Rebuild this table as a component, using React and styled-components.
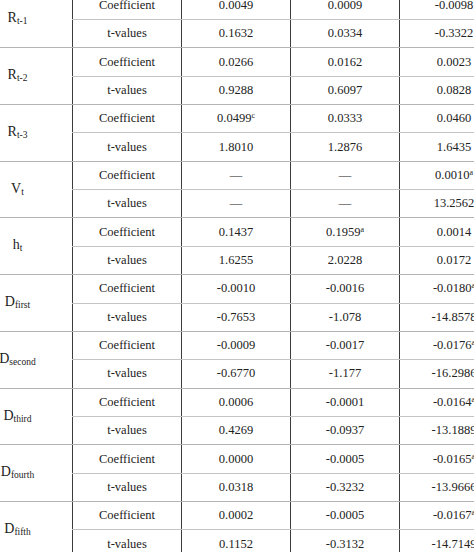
import React from "react";
import styled, { createGlobalStyle } from "styled-components";

const Global = createGlobalStyle`
  html, body { margin: 0; padding: 0; background: #fff; overflow: hidden; }
  body {
    width: 474px;
    height: 552px;
    font-family: "Liberation Serif", "Times New Roman", Times, serif;
  }
`;

const Table = styled.div`
  margin-top: -8.4px;
  margin-left: -37px;
  width: 545px;
  font-family: "Liberation Serif", "Times New Roman", Times, serif;
  font-size: 12.5px;
  color: #222;
`;

const Group = styled.div`
  display: flex;
  border-bottom: 1px solid #b4b4b4;
`;

const Label = styled.div`
  width: 109px;
  flex: none;
  display: flex;
  align-items: center;
  justify-content: center;
  font-size: 14px;
  color: #222;
  padding-bottom: 2px;
`;

const Sub = styled.span`
  font-size: 9.5px;
  position: relative;
  top: 3px;
`;

const Rows = styled.div`
  flex: 1;
  display: flex;
  flex-direction: column;
`;

const Row = styled.div`
  display: flex;
  box-sizing: border-box;
  height: ${(p) => (p.$last ? "27.37px" : "28.37px")};
  border-bottom: ${(p) => (p.$last ? "none" : "1px solid #c4c4c4")};
`;

const Cell = styled.div`
  width: 109px;
  flex: none;
  box-sizing: border-box;
  border-left: 1px solid #3c3c3c;
  display: flex;
  align-items: center;
  justify-content: center;
  white-space: nowrap;
`;

const Sup = styled.span`
  font-size: 8px;
  position: relative;
  top: -3px;
`;

const groups = [
  { l: "R", s: "t-1", c: ["0.0049", "0.0009", "-0.0098"], t: ["0.1632", "0.0334", "-0.3322"] },
  { l: "R", s: "t-2", c: ["0.0266", "0.0162", "0.0023"], t: ["0.9288", "0.6097", "0.0828"] },
  { l: "R", s: "t-3", c: [["0.0499", "c"], "0.0333", "0.0460"], t: ["1.8010", "1.2876", "1.6435"] },
  { l: "V", s: "t", c: ["—", "—", ["0.0010", "a"]], t: ["—", "—", "13.2562"] },
  { l: "h", s: "t", c: ["0.1437", ["0.1959", "a"], "0.0014"], t: ["1.6255", "2.0228", "0.0172"] },
  { l: "D", s: "first", c: ["-0.0010", "-0.0016", ["-0.0180", "a"]], t: ["-0.7653", "-1.078", "-14.8578"] },
  { l: "D", s: "second", c: ["-0.0009", "-0.0017", ["-0.0176", "a"]], t: ["-0.6770", "-1.177", "-16.2986"] },
  { l: "D", s: "third", c: ["0.0006", "-0.0001", ["-0.0164", "a"]], t: ["0.4269", "-0.0937", "-13.1889"] },
  { l: "D", s: "fourth", c: ["0.0000", "-0.0005", ["-0.0165", "a"]], t: ["0.0318", "-0.3232", "-13.9666"] },
  { l: "D", s: "fifth", c: ["0.0002", "-0.0005", ["-0.0167", "a"]], t: ["0.1152", "-0.3132", "-14.7149"] },
];

const Val = ({ v }) =>
  Array.isArray(v) ? (
    <>
      {v[0]}
      <Sup>{v[1]}</Sup>
    </>
  ) : (
    v
  );

export default function App() {
  return (
    <>
      <Global />
      <Table>
        {groups.map((g, i) => (
          <Group key={i}>
            <Label>
              {g.l}
              <Sub>{g.s}</Sub>
            </Label>
            <Rows>
              <Row>
                <Cell>Coefficient</Cell>
                {g.c.map((v, j) => (
                  <Cell key={j}>
                    <Val v={v} />
                  </Cell>
                ))}
              </Row>
              <Row $last>
                <Cell>t-values</Cell>
                {g.t.map((v, j) => (
                  <Cell key={j}>
                    <Val v={v} />
                  </Cell>
                ))}
              </Row>
            </Rows>
          </Group>
        ))}
      </Table>
    </>
  );
}
